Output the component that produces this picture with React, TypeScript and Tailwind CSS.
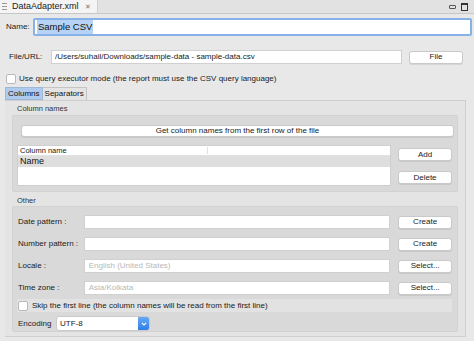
import React from 'react'

function MacButton({ label, className = '' }: { label: string; className?: string }) {
  return (
    <div
      className={`flex items-center justify-center bg-white rounded-[3px] border border-[#c9c9c9] shadow-[0_1px_0_rgba(0,0,0,0.08)] text-[#1a1a1a] ${className}`}
    >
      {label}
    </div>
  )
}

function Check({ className = '' }: { className?: string }) {
  return <div className={`w-[10px] h-[10px] shrink-0 bg-white border border-[#b8b8b8] rounded-[2px] ${className}`} />
}

function FieldRow({
  label,
  value,
  placeholder,
  button,
}: {
  label: string
  value?: string
  placeholder?: string
  button: string
}) {
  return (
    <div className="flex items-center h-[14px]">
      <div className="w-[71px] pl-[5px] whitespace-nowrap text-[#1a1a1a]">{label}</div>
      <div className="w-[308px] h-[14px] bg-white border border-[#d0d0d0] flex items-center pl-[4px] text-[#b8b8b8]">
        {value ?? placeholder}
      </div>
      <MacButton label={button} className="ml-[8px] w-[54px] h-[13px]" />
    </div>
  )
}

export default function App() {
  return (
    <div
      className="w-[474px] h-[341px] overflow-hidden bg-[#e8e8e8] text-[8px] leading-none text-[#1a1a1a] flex flex-col"
      style={{ fontFamily: '"Liberation Sans", Arial, sans-serif' }}
    >
      {/* editor tab strip */}
      <div className="h-[14px] bg-[#e2e2e2] border-b border-[#c6c6c6] flex items-stretch shrink-0">
        <div className="bg-[#f4f4f4] flex items-center pl-[2px] pr-[6px] gap-[5px] border-r border-[#cfcfcf]">
          <div className="w-[5px] h-[9px] flex flex-col justify-between py-[1px]">
            <div className="h-px bg-[#9a9a9a]" />
            <div className="h-px bg-[#9a9a9a]" />
            <div className="h-px bg-[#9a9a9a]" />
          </div>
          <span className="text-[9px] text-[#222]">DataAdapter.xml</span>
          <span className="text-[7px] text-[#777] ml-[1px]">✕</span>
        </div>
        <div className="flex-1" />
        <div className="flex items-center gap-[5px] pr-[6px]">
          <div className="w-[7px] h-[4px] border border-[#555] rounded-[1px]" />
          <div className="w-[7px] h-[8px] border border-[#333] border-t-2" />
        </div>
      </div>

      {/* name */}
      <div className="flex items-center h-[18px] mt-[4px] pl-[6px] pr-[2px]">
        <span className="w-[27px]">Name:</span>
        <div className="flex-1 h-[18px] bg-white border-2 border-[#86b2e8] rounded-[2px] flex items-center pl-[2px]">
          <span className="bg-[#b6d3f5] px-[1px] py-[2px] text-[9.5px] text-[#111]">Sample CSV</span>
        </div>
      </div>

      {/* file */}
      <div className="flex items-center h-[14px] mt-[14px] pl-[9px]">
        <span className="w-[42px]">File/URL:</span>
        <div className="w-[351px] h-[14px] bg-white border border-[#d0d0d0] flex items-center pl-[3px]">
          /Users/suhail/Downloads/sample-data - sample-data.csv
        </div>
        <MacButton label="File" className="ml-[7px] w-[54px] h-[13px]" />
      </div>

      {/* query mode */}
      <div className="flex items-center mt-[9px] pl-[6px] gap-[3px] h-[11px]">
        <Check />
        <span>Use query executor mode (the report must use the CSV query language)</span>
      </div>

      {/* tabs */}
      <div className="flex items-end mt-[3px] ml-[5px] h-[13px] shrink-0">
        <div className="h-[13px] px-[2px] bg-[#aecbef] border border-[#a0b8d8] flex items-center text-[#111]">Columns</div>
        <div className="h-[13px] px-[2px] bg-[#e4e4e4] border-t border-r border-[#c4c4c4] flex items-center text-[#111]">
          Separators
        </div>
      </div>

      {/* tab content */}
      <div className="ml-[5px] mb-[4px] w-[461px] flex-1 border-t border-r border-b border-[#cfcfcf] bg-[#e4e4e4] flex flex-col px-[7px] pb-[4px]">
        <div className="pl-[5px] pt-[4px] pb-[2px] h-[14px] text-[7.5px] text-[#333]">Column names</div>
        <div className="bg-[#d9d9d9] border border-[#d2d2d2] rounded-[2px] flex flex-col pl-[4px] pr-[5px] pt-[9px] pb-[5px]">
          <MacButton label="Get column names from the first row of the file" className="ml-[4px] h-[12px] w-[433px]" />
          <div className="flex mt-[8px]">
            <div className="w-[376px] h-[41px] bg-white border border-[#cfcfcf] flex flex-col">
              <div className="h-[10px] flex items-center border-b border-[#e2e2e2]">
                <div className="w-[190px] pl-[2px] border-r border-[#e0e0e0] text-[7.5px]">Column name</div>
              </div>
              <div className="h-[11px] bg-[#dedede] flex items-center pl-[2px] text-[9px] text-[#111]">Name</div>
            </div>
            <div className="flex flex-col ml-[7px] pt-[3px] gap-[10px]">
              <MacButton label="Add" className="w-[54px] h-[13px]" />
              <MacButton label="Delete" className="w-[54px] h-[13px]" />
            </div>
          </div>
        </div>

        <div className="pl-[5px] pt-[5px] pb-[2px] h-[14px] text-[7.5px] text-[#333]">Other</div>
        <div className="flex-1 bg-[#d9d9d9] border border-[#d2d2d2] rounded-[2px] flex flex-col pt-[8px] pr-[5px] gap-[8px]">
          <FieldRow label="Date pattern :" value="" button="Create" />
          <FieldRow label="Number pattern :" value="" button="Create" />
          <FieldRow label="Locale :" placeholder="English (United States)" button="Select..." />
          <FieldRow label="Time zone :" placeholder="Asia/Kolkata" button="Select..." />
          <div className="flex items-center h-[13px] ml-[4px] bg-[#e2e2e2] gap-[4px] pl-[1px] -mt-[4px]">
            <Check />
            <span>Skip the first line (the column names will be read from the first line)</span>
          </div>
          <div className="flex items-center pl-[5px] -mt-[4px]">
            <span className="w-[38px]">Encoding</span>
            <div className="w-[94px] h-[15px] bg-white border border-[#cacaca] rounded-[3px] flex items-center overflow-hidden">
              <span className="flex-1 pl-[3px]">UTF-8</span>
              <div className="w-[11px] h-full bg-gradient-to-b from-[#66a8f5] to-[#2f7fe6] flex items-center justify-center">
                <svg width="6" height="4" viewBox="0 0 6 4">
                  <path d="M0.8 0.8 L3 3 L5.2 0.8" stroke="white" strokeWidth="1.1" fill="none" />
                </svg>
              </div>
            </div>
          </div>
        </div>
      </div>
    </div>
  )
}
